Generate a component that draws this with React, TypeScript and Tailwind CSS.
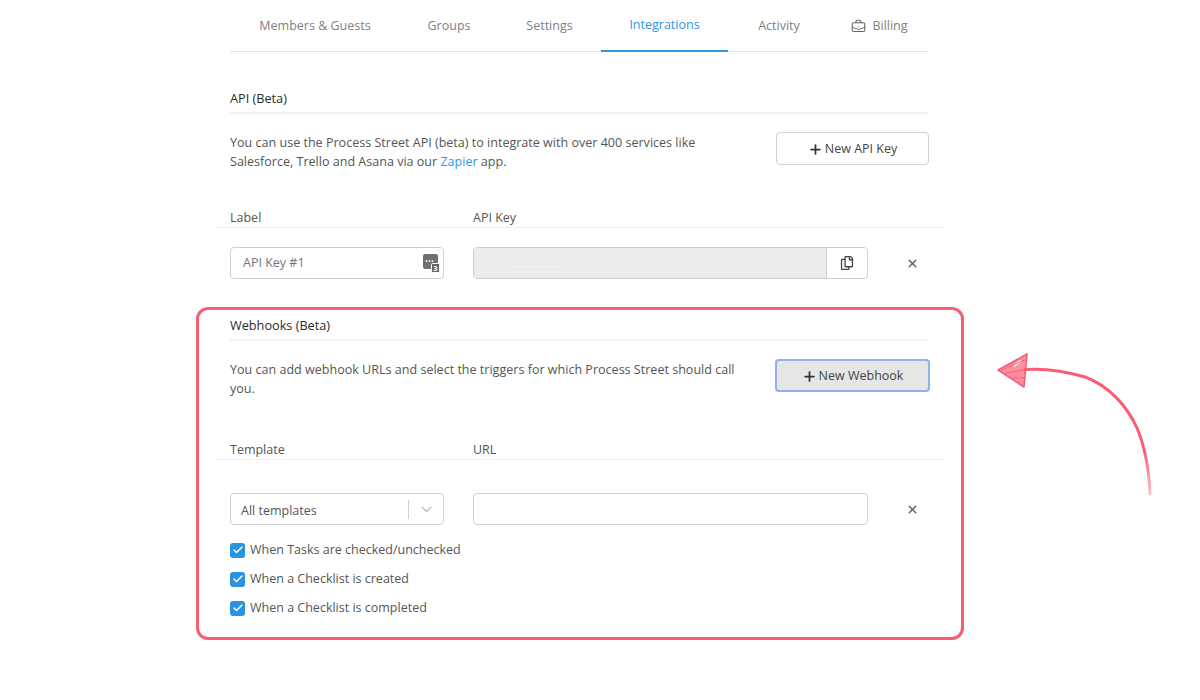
import React from "react";
import { X, Plus, BriefcaseBusiness, ChevronDown, Check } from "lucide-react";
import { FaRegCopy } from "react-icons/fa";

const font = { fontFamily: '"Open Sans", "Noto Sans", sans-serif' };

function Tab({ children, active, w }: { children: React.ReactNode; active?: boolean; w: string }) {
  return (
    <div
      className={
        (active
          ? "h-[52px] flex items-center justify-center gap-[6px] whitespace-nowrap text-[#2f96e0] border-b-2 border-[#2f96e0] -mb-px "
          : "h-[52px] flex items-center justify-center gap-[6px] whitespace-nowrap text-[#7f7f7f] ") + w
      }
    >
      {children}
    </div>
  );
}

function SectionHead({ children }: { children: React.ReactNode }) {
  return (
    <div className="h-[25px] border-b-2 border-[#f3f3f3] text-[12.7px] font-medium text-[#2b2b2b] leading-[18px]">
      {children}
    </div>
  );
}

function ColHead({ a, b }: { a: string; b: string }) {
  return (
    <div className="-mx-[14px] px-[14px] h-[20px] border-b border-[#eeeeee] flex text-[#555] text-[12.5px] leading-[20px]">
      <div className="w-[243px]">{a}</div>
      <div>{b}</div>
    </div>
  );
}

function Check1({ children }: { children: React.ReactNode }) {
  return (
    <div className="h-[16px] flex items-center gap-[5px] text-[#555] text-[12.5px] whitespace-nowrap">
      <span className="w-[15px] h-[15px] rounded-[3px] bg-[#2a92e0] flex items-center justify-center">
        <Check size={12} strokeWidth={3} color="#fff" />
      </span>
      {children}
    </div>
  );
}

export default function App() {
  return (
    <div className="relative w-[1200px] h-[700px] bg-white overflow-hidden" style={font}>
      <div className="ml-[230px] w-[699px]">
        <div className="h-[52px] border-b border-[#e3e3e3] flex text-[12.5px]">
          <Tab w="w-[170px]">Members &amp; Guests</Tab>
          <Tab w="w-[98px]">Groups</Tab>
          <Tab w="w-[103px]">Settings</Tab>
          <Tab active w="w-[127px]">Integrations</Tab>
          <Tab w="w-[102px]">Activity</Tab>
          <Tab w="w-[99px]">
            <BriefcaseBusiness size={15} strokeWidth={1.7} color="#666" />
            Billing
          </Tab>
        </div>

        <div className="pt-[37px]">
          <SectionHead>API (Beta)</SectionHead>
          <div className="pt-[18px] flex justify-between">
            <p className="w-[490px] mt-px text-[12.55px] leading-[19px] text-[#555]">
              You can use the Process Street API (beta) to integrate with over 400 services like Salesforce, Trello and
              Asana via our <span className="text-[#2f96e0]">Zapier</span> app.
            </p>
            <button className="w-[153px] h-[33px] pt-px border border-[#d0d0d0] rounded-[4px] bg-white text-[12.5px] text-[#444] flex items-center justify-center gap-[2px]">
              <Plus size={15} strokeWidth={2.8} color="#333" />
              New API Key
            </button>
          </div>
          <div className="pt-[37px]">
            <ColHead a="Label" b="API Key" />
          </div>
          <div className="pt-[19px] flex items-center">
            <div className="w-[214px] h-[32px] pt-px border border-[#cfcfcf] rounded-[4px] pl-[12px] pr-[3px] flex items-center justify-between text-[12.5px] text-[#757575]">
              API Key #1
              <svg width="17" height="19" viewBox="0 0 17 19" className="-mt-px">
                <rect x="0" y="0" width="15" height="15" rx="2" fill="#707070" />
                <circle cx="3.5" cy="7" r="1" fill="#e8e8e8" />
                <circle cx="6.5" cy="7" r="1" fill="#e8e8e8" />
                <circle cx="9.5" cy="7" r="1" fill="#e8e8e8" />
                <rect x="8.5" y="9.5" width="8" height="9" rx="1" fill="#666" stroke="#fff" />
                <text x="12.5" y="17" textAnchor="middle" fontSize="7.5" fontWeight="700" fill="#fff">
                  3
                </text>
              </svg>
            </div>
            <div className="ml-[29px] w-[395px] h-[32px] border border-[#cfcfcf] rounded-[4px] flex overflow-hidden">
              <div className="flex-1 bg-[#ececec] border-r border-[#cfcfcf] pt-[18px] pl-[36px]">
                <div className="w-[52px] h-px bg-[#f3f3f3]" />
              </div>
              <div className="w-[40px] flex items-center justify-center">
                <FaRegCopy size={14} color="#444" />
              </div>
            </div>
            <div className="ml-[37px] w-[14px] flex justify-center">
              <X size={13} strokeWidth={2.8} color="#666" />
            </div>
          </div>
        </div>

        <div className="pt-[37px]">
          <SectionHead>Webhooks (Beta)</SectionHead>
          <div className="pt-[18px] flex justify-between">
            <p className="w-[520px] mt-px text-[12.55px] leading-[19px] text-[#555]">
              You can add webhook URLs and select the triggers for which Process Street should call you.
            </p>
            <button className="w-[155px] h-[33px] pt-px -mr-px -ml-px border-2 border-[#8fb2e8] rounded-[4px] bg-[#e6e6e6] text-[12.5px] text-[#444] flex items-center justify-center gap-[2px]">
              <Plus size={15} strokeWidth={2.8} color="#333" />
              New Webhook
            </button>
          </div>
          <div className="pt-[42px]">
            <ColHead a="Template" b="URL" />
          </div>
          <div className="pt-[33px] flex items-center">
            <div className="w-[214px] h-[32px] border border-[#cfcfcf] rounded-[4px] pl-[10px] flex items-center text-[12.5px] text-[#555]">
              <span className="flex-1 pt-[4px]">All templates</span>
              <span className="w-px h-[19px] bg-[#cfcfcf]" />
              <span className="w-[34px] flex justify-center">
                <ChevronDown size={17} strokeWidth={2} color="#c4c4c4" />
              </span>
            </div>
            <div className="ml-[29px] w-[395px] h-[32px] border border-[#cfcfcf] rounded-[4px]" />
            <div className="ml-[37px] w-[14px] flex justify-center">
              <X size={13} strokeWidth={2.8} color="#666" />
            </div>
          </div>
          <div className="pt-[17px] flex flex-col gap-[13px]">
            <Check1>When Tasks are checked/unchecked</Check1>
            <Check1>When a Checklist is created</Check1>
            <Check1>When a Checklist is completed</Check1>
          </div>
        </div>
      </div>

      <div className="absolute left-[196px] top-[307px] w-[768px] h-[333px] border-[3px] border-[#f95d73] rounded-[12px] pointer-events-none" />

      <svg className="absolute left-[985px] top-[340px]" width="180" height="165" viewBox="0 0 180 165" fill="none">
        <defs>
          <linearGradient id="arrowFade" gradientUnits="userSpaceOnUse" x1="0" y1="110" x2="0" y2="156">
            <stop offset="0" stopColor="#f95d73" />
            <stop offset="1" stopColor="#f95d73" stopOpacity="0.35" />
          </linearGradient>
        </defs>
        <path
          d="M40 29.5 C62 28 80 31 100 37 C125 46 143 68 152 88 C160 107 164 130 165 154"
          stroke="url(#arrowFade)"
          strokeWidth="3"
          strokeLinecap="round"
        />
        <path d="M13 30 L42 14 L39 47 Z" fill="#f95d73" fillOpacity="0.68" stroke="#f95d73" strokeWidth="1.6" strokeLinejoin="round" />
        <path d="M29 26 L36 21" stroke="#fff" strokeWidth="2.4" />
        <path d="M16 30 L40 20 M20 33 L39 30 M28 38 L40 38" stroke="#f95d73" strokeWidth="1" />
      </svg>
    </div>
  );
}
